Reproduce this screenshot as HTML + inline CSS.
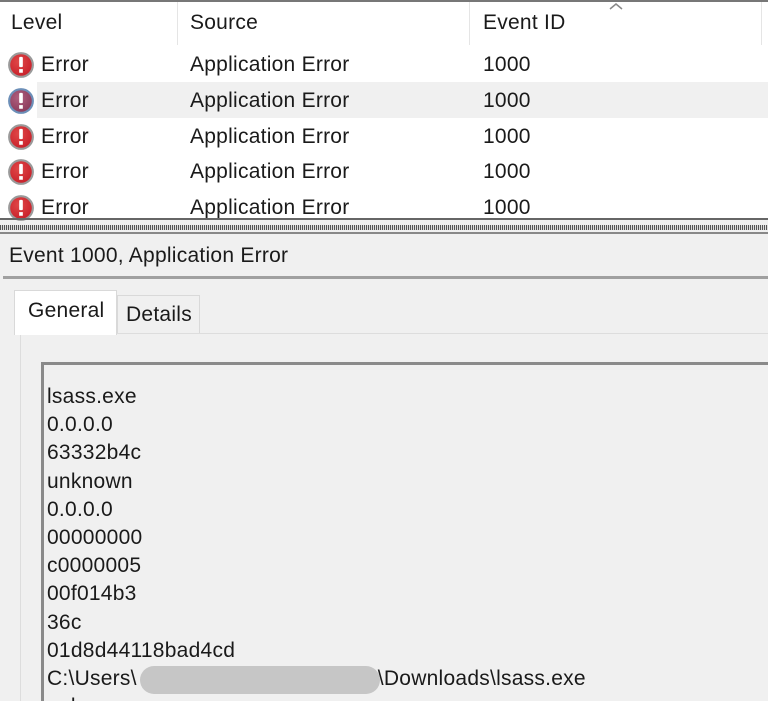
<!DOCTYPE html>
<html style="overflow:hidden"><head><style>
html,body{overflow:hidden}
body{margin:0;width:768px;height:701px;overflow:hidden;background:#f0f0f0;font-family:"Liberation Sans",sans-serif;color:#1a1a1a;position:relative}
.a{position:absolute}
.t{font-size:21px;letter-spacing:0.25px;white-space:nowrap}
.row{position:absolute;left:0;width:768px;height:36px}
.ic{position:absolute;left:7px;top:4px;width:28px;height:28px}
</style></head><body>
<div class="a" style="left:0;top:0;width:768px;height:219px;background:#fff"></div>
<div class="a" style="left:0;top:0;width:768px;height:2px;background:#777"></div>
<div class="a" style="left:177px;top:2px;width:1px;height:43px;background:#e5e5e5"></div>
<div class="a" style="left:469px;top:2px;width:1px;height:43px;background:#e5e5e5"></div>
<div class="a" style="left:761px;top:2px;width:1px;height:43px;background:#e5e5e5"></div>
<svg class="a" style="left:608px;top:1px" width="16" height="10"><path d="M2 8 L8 3 L14 8" stroke="#888" stroke-width="1.5" fill="none"/></svg>
<div class="a t" style="left:11px;top:11px">Level</div>
<div class="a t" style="left:190px;top:11px">Source</div>
<div class="a t" style="left:483px;top:11px">Event ID</div>

<div class="a" style="left:37px;top:82px;width:731px;height:36px;background:#f0f0f0"></div>

<div id="rows"></div>
<script>
var ys=[47,83,119,154,190];
var h='';
ys.forEach(function(y,i){
 var c=i==1?'#8a3a5a':'#c8202a', c2=i==1?'#b06080':'#e04848', r=i==1?'#6c8fb8':'#9a9a9a';
 h+='<div class="row" style="top:'+y+'px"><svg class="ic" viewBox="0 0 26 26"><defs><radialGradient id="g'+i+'" cx="40%" cy="35%" r="70%"><stop offset="0" stop-color="'+c2+'"/><stop offset="1" stop-color="'+c+'"/></radialGradient></defs><circle cx="13" cy="13" r="12" fill="'+r+'"/><circle cx="13" cy="13" r="10" fill="url(#g'+i+')"/><rect x="11.3" y="5.5" width="3.4" height="9.5" rx="1" fill="#fff"/><rect x="11.3" y="16.8" width="3.4" height="3.4" fill="#fff"/></svg>'+
 '<div class="a t" style="left:41px;top:6px">Error</div><div class="a t" style="left:190px;top:6px">Application Error</div><div class="a t" style="left:483px;top:6px">1000</div></div>';
});
document.getElementById('rows').innerHTML=h;
</script>
<div class="a" style="left:0;top:218px;width:768px;height:2px;background:#666"></div>
<div class="a" style="left:0;top:225px;width:768px;height:5px;background:repeating-linear-gradient(90deg,#555 0 1px,#ddd 1px 2px)"></div>
<div class="a" style="left:0;top:232px;width:768px;height:2px;background:#888"></div>
<div class="a t" style="left:9px;top:244px">Event 1000, Application Error</div>
<div class="a" style="left:3px;top:276px;width:765px;height:3px;background:#a0a0a0"></div>

<div class="a" style="left:20px;top:333px;width:748px;height:368px;background:#f0f0f0;border-left:1px solid #ddd;border-top:1px solid #ddd"></div>
<div class="a" style="left:117px;top:295px;width:83px;height:38px;background:#f0f0f0;border:1px solid #d9d9d9;border-bottom:none;box-sizing:border-box"></div>
<div class="a" style="left:14px;top:290px;width:103px;height:45px;background:#fff;border:1px solid #d9d9d9;border-bottom:none;box-sizing:border-box"></div>
<div class="a t" style="left:28px;top:299px">General</div>
<div class="a t" style="left:126px;top:303px">Details</div>

<div class="a" style="left:41px;top:362px;width:727px;height:339px;background:#f0f0f0;border-left:3px solid #8a8a8a;border-top:3px solid #8a8a8a;box-sizing:border-box"></div>
<div class="a" style="left:47px;top:383px;width:720px;height:318px;overflow:hidden"><div class="t" style="line-height:28.2px">lsass.exe<br>0.0.0.0<br>63332b4c<br>unknown<br>0.0.0.0<br>00000000<br>c0000005<br>00f014b3<br>36c<br>01d8d44118bad4cd<br>C:\Users\<span style="display:inline-block;width:241px"></span>\Downloads\lsass.exe<br>unknown</div></div>
<div class="a" style="left:140px;top:666px;width:240px;height:28px;border-radius:14px;background:#c6c6c6"></div>
</body></html>
